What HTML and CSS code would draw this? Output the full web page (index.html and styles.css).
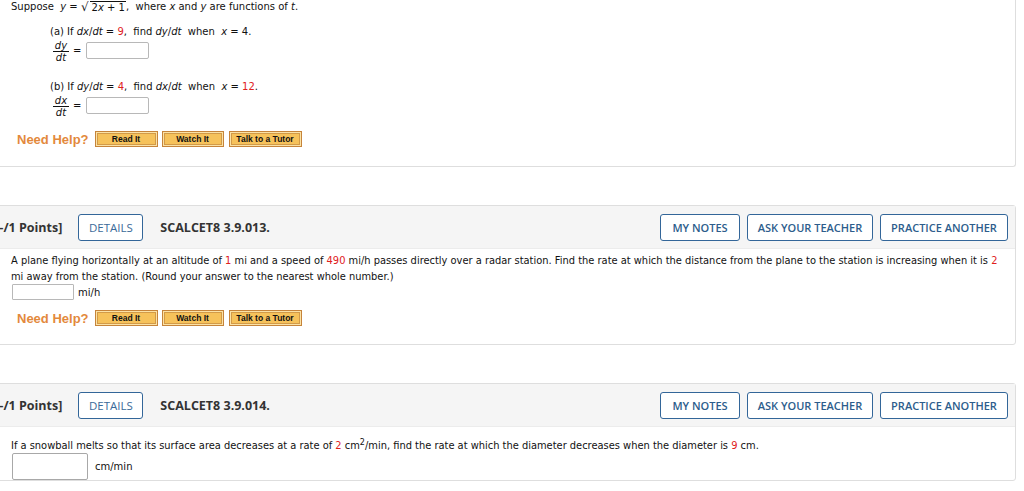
FILE: index.html
```html
<!DOCTYPE html>
<html>
<head>
<meta charset="utf-8">
<link rel="stylesheet" href="styles.css">
</head>
<body>
<div class="page">
  <section class="card card-first">
    <div class="card-body body1">
      <p class="line">Suppose &nbsp;<i>y</i> = <span class="sqrt"><span class="rad">√</span><span class="radicand">2<i>x</i> + 1</span></span>, &nbsp;where <i>x</i> and <i>y</i> are functions of <i>t</i>.</p>
      <div class="part">
        <p class="line">(a) If <i>dx</i>/<i>dt</i> = <span class="red">9</span>, &nbsp;find <i>dy</i>/<i>dt</i> &nbsp;when &nbsp;<i>x</i> = 4.</p>
        <div class="frac-row">
          <span class="frac"><span class="num"><i>dy</i></span><span class="den"><i>dt</i></span></span>
          <span class="eq">=</span>
          <span class="input small"></span>
        </div>
      </div>
      <div class="part part-b">
        <p class="line">(b) If <i>dy</i>/<i>dt</i> = <span class="red">4</span>, &nbsp;find <i>dx</i>/<i>dt</i> &nbsp;when &nbsp;<i>x</i> = <span class="red">12</span>.</p>
        <div class="frac-row">
          <span class="frac"><span class="num"><i>dx</i></span><span class="den"><i>dt</i></span></span>
          <span class="eq">=</span>
          <span class="input small"></span>
        </div>
      </div>
      <div class="help help-first">
        <span class="help-label">Need Help?</span>
        <span class="hbtn w63">Read It</span>
        <span class="hbtn w62">Watch It</span>
        <span class="hbtn w73">Talk to a Tutor</span>
      </div>
    </div>
  </section>

  <section class="card">
    <header class="card-head">
      <span class="points">[–/1 Points]</span>
      <span class="obtn details">DETAILS</span>
      <span class="code">SCALCET8 3.9.013.</span>
      <span class="spacer"></span>
      <span class="obtn notes">MY NOTES</span>
      <span class="obtn ask">ASK YOUR TEACHER</span>
      <span class="obtn practice">PRACTICE ANOTHER</span>
    </header>
    <div class="card-body body2">
      <p class="para">A plane flying horizontally at an altitude of <span class="red">1</span> mi and a speed of <span class="red">490</span> mi/h passes directly over a radar station. Find the rate at which the distance from the plane to the station is increasing when it is <span class="red">2</span> mi away from the station. (Round your answer to the nearest whole number.)</p>
      <div class="ans-row">
        <span class="input mid"></span>
        <span class="unit">mi/h</span>
      </div>
      <div class="help help-second">
        <span class="help-label">Need Help?</span>
        <span class="hbtn w63">Read It</span>
        <span class="hbtn w62">Watch It</span>
        <span class="hbtn w73">Talk to a Tutor</span>
      </div>
    </div>
  </section>

  <section class="card">
    <header class="card-head">
      <span class="points">[–/1 Points]</span>
      <span class="obtn details">DETAILS</span>
      <span class="code">SCALCET8 3.9.014.</span>
      <span class="spacer"></span>
      <span class="obtn notes">MY NOTES</span>
      <span class="obtn ask">ASK YOUR TEACHER</span>
      <span class="obtn practice">PRACTICE ANOTHER</span>
    </header>
    <div class="card-body body3">
      <p class="para">If a snowball melts so that its surface area decreases at a rate of <span class="red">2</span> cm<sup>2</sup>/min, find the rate at which the diameter decreases when the diameter is <span class="red">9</span> cm.</p>
      <div class="ans-row big-row">
        <span class="input big"></span>
        <span class="unit unit-big">cm/min</span>
      </div>
    </div>
  </section>
</div>
</body>
</html>
```

FILE: styles.css
```css
html, body {
  margin: 0;
  padding: 0;
  background: #ffffff;
  overflow: hidden;
}

body {
  font-family: "DejaVu Sans", Verdana, sans-serif;
  font-size: 10px;
  color: #111111;
}

.page {
  width: 1036px;
  margin-left: -20px;
}

p { margin: 0; }

.red { color: #e0201c; }

.card {
  border: 1px solid #dedede;
  border-radius: 3px;
  background: #ffffff;
  margin-bottom: 38px;
}

.card-first {
  margin-top: -14px;
  border-top: none;
}

.card-body {
  padding-left: 30px;
  padding-right: 4px;
}

.body1 {
  padding-top: 14px;
  padding-bottom: 19px;
}

.line {
  line-height: 14px;
  white-space: nowrap;
}

.sqrt {
  display: inline-flex;
  align-items: flex-end;
  vertical-align: -1px;
}

.rad {
  font-size: 12px;
  line-height: 12px;
  margin-right: 1px;
}

.radicand {
  border-top: 1px solid #111;
  font-size: 10px;
  padding: 0 1px 0 2px;
  line-height: 11px;
}

.part {
  margin-left: 39px;
  margin-top: 11px;
}

.part-b {
  margin-top: 17px;
}

.frac-row {
  display: flex;
  align-items: flex-start;
  margin-top: 2px;
  margin-left: 3px;
}

.frac {
  display: inline-flex;
  flex-direction: column;
  align-items: center;
  width: 16px;
  font-size: 10px;
}

.num {
  line-height: 10px;
  border-bottom: 1px solid #111;
  width: 100%;
  text-align: center;
}

.den {
  line-height: 10px;
  padding-top: 1px;
}

.eq {
  margin-left: 4px;
  margin-right: 5px;
  margin-top: 5px;
  font-size: 10px;
  line-height: 10px;
}

.input {
  display: inline-block;
  box-sizing: border-box;
  border: 1px solid #b8b8b8;
  border-radius: 2px;
  background: #fff;
}

.input.small {
  width: 63px;
  height: 17px;
  margin-top: 1px;
}

.input.mid {
  width: 62px;
  height: 16px;
  border-radius: 1px;
}

.input.big {
  width: 76px;
  height: 27px;
  border-color: #a8a8a8;
  border-radius: 2px;
}

.help {
  display: flex;
  align-items: center;
  margin-left: 6px;
}

.help-first {
  margin-top: 13px;
}

.help-label {
  font-family: "Liberation Sans", Arial, sans-serif;
  font-weight: bold;
  font-size: 13px;
  color: #e3893c;
  margin-right: 6px;
}

.hbtn {
  display: inline-flex;
  align-items: center;
  justify-content: center;
  box-sizing: border-box;
  height: 16px;
  margin-right: 4px;
  background: #f6c25b;
  border: 1px solid #c6843a;
  box-shadow: inset 0 0 0 1px #fbe2a6, inset 0 0 0 2px #d29a48;
  font-family: "Liberation Sans", Arial, sans-serif;
  font-weight: bold;
  font-size: 8.5px;
  color: #111;
}

.w63 { width: 63px; }
.w62 { width: 62px; }
.w73 { width: 73px; margin-left: 1px; }

.card-head {
  display: flex;
  align-items: center;
  height: 43px;
  box-sizing: border-box;
  padding: 0 7px 0 12px;
  background: #f5f5f5;
  border-bottom: 1px solid #ececec;
  font-family: "Open Sans", sans-serif;
}

.points {
  font-weight: bold;
  font-size: 12.5px;
  color: #333;
  margin-right: 16px;
}

.obtn {
  display: inline-flex;
  align-items: center;
  justify-content: center;
  box-sizing: border-box;
  height: 27px;
  border: 1px solid #336699;
  border-radius: 3px;
  background: #fff;
  color: #2d5d8c;
  font-family: "Open Sans", sans-serif;
  font-size: 11px;
  font-weight: 600;
}

.details {
  width: 65px;
  font-weight: 500;
  font-size: 11.5px;
  color: #3a6a99;
}

.code {
  margin-left: 17px;
  font-weight: bold;
  font-size: 12.5px;
  color: #333;
}

.spacer { flex: 1; }

.notes { width: 80px; }
.ask { width: 126px; margin-left: 7px; }
.practice { width: 128px; margin-left: 7px; }

.body2 {
  padding-top: 4px;
  padding-bottom: 18px;
}

.para {
  line-height: 16px;
  font-size: 9.9px;
}

.ans-row {
  display: flex;
  align-items: center;
  margin-top: -1px;
  margin-left: 1px;
}

.unit {
  margin-left: 4px;
}

.help-second {
  margin-top: 10px;
}

.body3 {
  padding-top: 11px;
}

.body3 sup {
  font-size: 8px;
  line-height: 0;
}

.big-row {
  margin-top: -1px;
}

.unit-big {
  margin-left: 7px;
}
```
